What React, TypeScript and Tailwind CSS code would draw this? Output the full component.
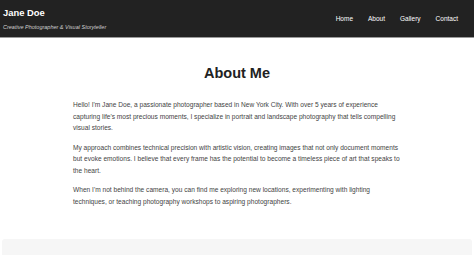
export default function App() {
  const links = ["Home", "About", "Gallery", "Contact"];

  return (
    <div className="min-h-[257px] bg-white font-['Liberation_Sans',Arial,sans-serif]">
      <header className="flex h-[38px] items-center justify-between border-b border-[#9a9a9a] bg-[#222222] pl-[3px] pr-[16px]">
        <div className="flex flex-col">
          <h1 className="text-[9.4px] font-bold leading-[12px] text-white">Jane Doe</h1>
          <p className="mt-[4px] text-[5.5px] italic leading-[8px] text-[#cfcfcf]">
            Creative Photographer &amp; Visual Storyteller
          </p>
        </div>
        <nav className="flex gap-[15px] text-[6.5px]">
          {links.map((l) => (
            <a key={l} href="#" className="text-white no-underline">
              {l}
            </a>
          ))}
        </nav>
      </header>

      <main className="mx-auto w-[328px] pt-[26px]">
        <h2 className="text-center text-[14.5px] font-bold leading-[18px] text-[#222222]">
          About Me
        </h2>
        <div className="mt-[17px] flex flex-col gap-[8px] text-[6.6px] leading-[11.5px] text-[#444444]">
          <p>
            Hello! I'm Jane Doe, a passionate photographer based in New York City. With over 5 years of experience
            capturing life's most precious moments, I specialize in portrait and landscape photography that tells compelling
            visual stories.
          </p>
          <p>
            My approach combines technical precision with artistic vision, creating images that not only document moments
            but evoke emotions. I believe that every frame has the potential to become a timeless piece of art that speaks to
            the heart.
          </p>
          <p>
            When I'm not behind the camera, you can find me exploring new locations, experimenting with lighting
            techniques, or teaching photography workshops to aspiring photographers.
          </p>
        </div>
      </main>

      <div className="mx-[2px] mt-[32px] h-[16px] rounded-t-[3px] bg-[#f6f6f6]" />
    </div>
  );
}
